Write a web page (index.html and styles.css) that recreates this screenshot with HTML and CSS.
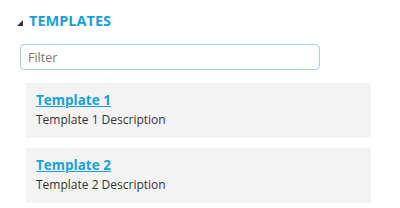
FILE: index.html
```html
<!DOCTYPE html>
<html>
<head>
<meta charset="utf-8">
<link rel="stylesheet" href="styles.css">
</head>
<body>
<div class="panel">
  <div class="header">
    <svg class="caret" width="6" height="6" viewBox="0 0 6 6"><polygon points="6,0 6,6 0,6" fill="#333"/></svg>
    <span class="title">TEMPLATES</span>
  </div>
  <input class="filter" type="text" placeholder="Filter">
  <div class="list">
    <div class="card">
      <a class="card-title" href="#">Template 1</a>
      <div class="card-desc">Template 1 Description</div>
    </div>
    <div class="card">
      <a class="card-title" href="#">Template 2</a>
      <div class="card-desc">Template 2 Description</div>
    </div>
  </div>
</div>
</body>
</html>
```
FILE: styles.css
```css
html, body {
  margin: 0;
  padding: 0;
  background: #fff;
}
body {
  font-family: "Open Sans", "Liberation Sans", sans-serif;
  color: #333;
}
.panel {
  padding: 11px 0 0 17px;
}
.header {
  display: flex;
  align-items: center;
  gap: 6px;
  height: 20px;
}
.caret {
  display: block;
  margin-top: 4px;
}
.title {
  font-size: 14.5px;
  font-weight: bold;
  color: #1a9fd8;
  line-height: 20px;
}
.filter {
  display: block;
  box-sizing: border-box;
  margin: 13px 0 0 3px;
  width: 300px;
  height: 26px;
  border: 1px solid #a3d2e5;
  border-radius: 4px;
  padding: 0 7px;
  font-family: inherit;
  font-size: 12.5px;
  color: #333;
  outline: none;
}
.filter::placeholder {
  color: #777;
}
.list {
  display: flex;
  flex-direction: column;
  gap: 10px;
  margin: 13px 0 0 9px;
  width: 345px;
}
.card {
  box-sizing: border-box;
  height: 55px;
  background: #f3f3f3;
  padding: 8px 10px;
}
.card-title {
  display: block;
  font-size: 13.5px;
  font-weight: bold;
  color: #1a9fd8;
  line-height: 18px;
  text-decoration: underline;
}
.card-desc {
  margin-top: 1px;
  font-size: 12px;
  line-height: 20px;
  color: #333;
}
```
